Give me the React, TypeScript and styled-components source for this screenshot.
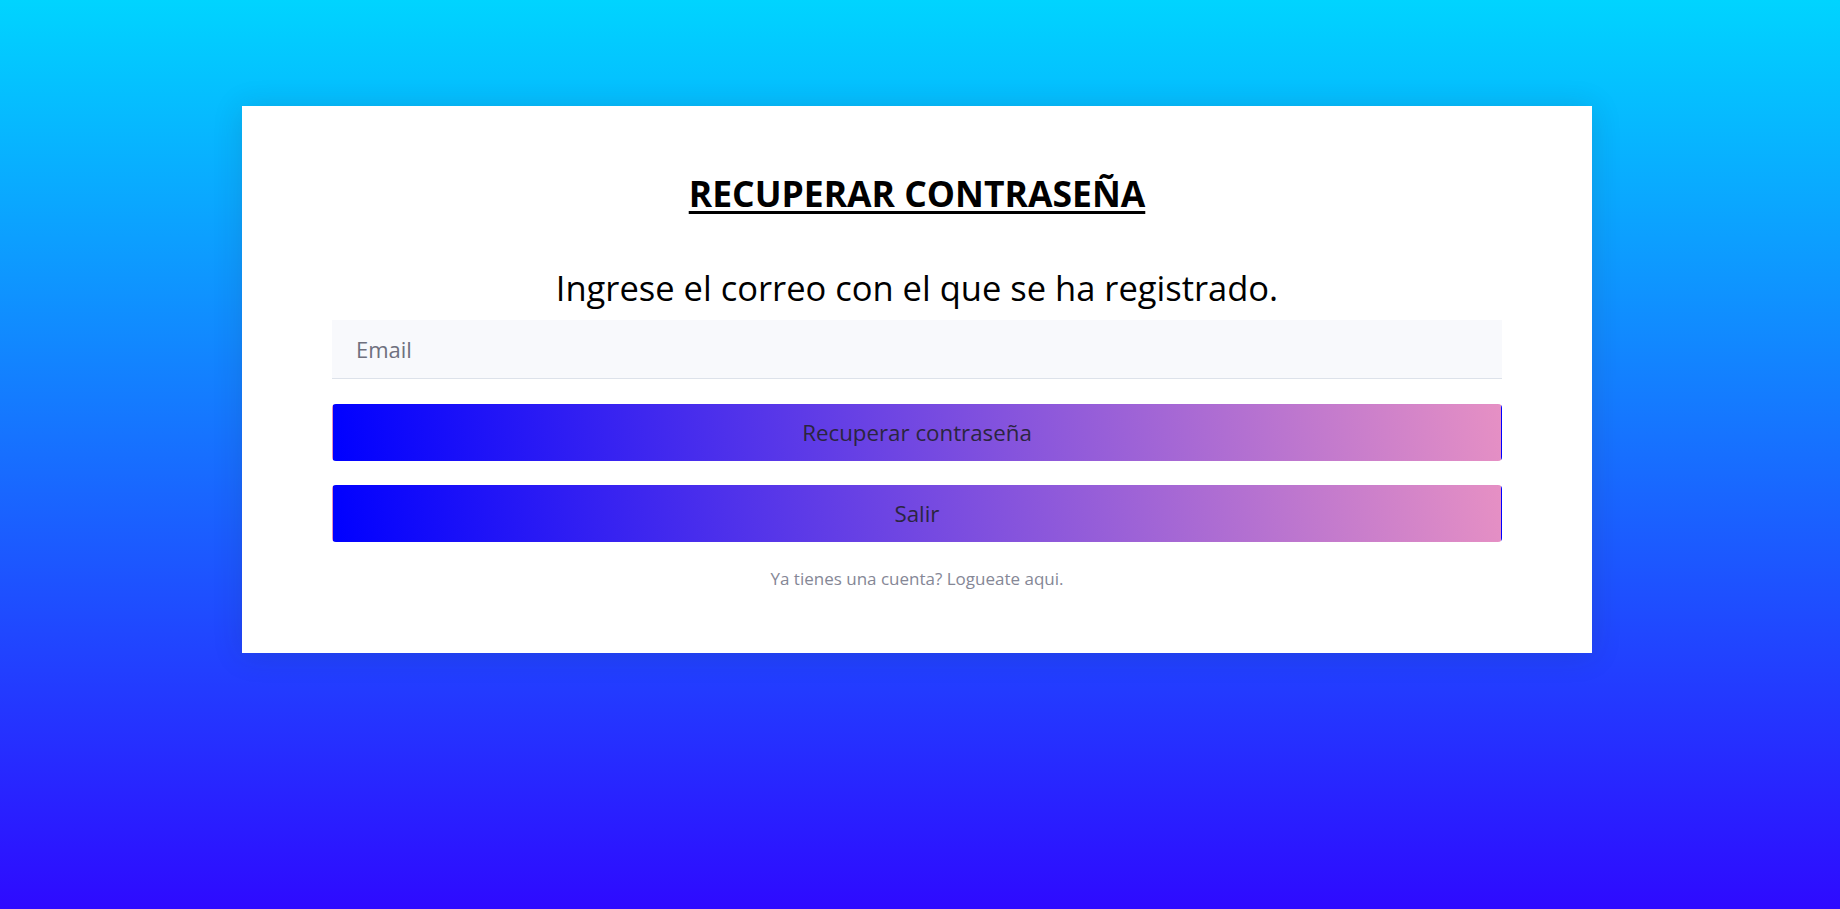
import React, { useState } from 'react';
import styled, { createGlobalStyle } from 'styled-components';

const GlobalStyle = createGlobalStyle`
  html, body {
    margin: 0;
    padding: 0;
  }

  body {
    min-height: 100vh;
    background: linear-gradient(180deg, #00d4ff 0%, #2e0aff 100%);
    background-attachment: fixed;
    font-family: 'Open Sans', 'Noto Sans', sans-serif;
    color: #3a3b45;
  }

  * {
    box-sizing: border-box;
  }
`;

const Page = styled.div`
  min-height: 100vh;
  padding: 106px 6px 0 0;
`;

const Card = styled.div`
  width: 1350px;
  margin: 0 auto;
  background: #ffffff;
  padding: 66px 90px 62px;
  box-shadow: 0 0.15rem 1.75rem 0 rgba(33, 40, 50, 0.15);
  text-align: center;
`;

const Title = styled.h1`
  margin: 0;
  font-size: 35.5px;
  line-height: 43px;
  font-weight: 700;
  color: #000;
  text-decoration: underline;
  text-decoration-thickness: 2.5px;
  text-underline-offset: 4px;
`;

const Subtitle = styled.h3`
  margin: 55px 0 14px;
  font-size: 34.5px;
  line-height: 36px;
  font-weight: 500;
  color: #000;
`;

const Form = styled.form`
  display: flex;
  flex-direction: column;
  gap: 24px;
`;

const EmailInput = styled.input`
  width: 100%;
  height: 59px;
  margin-bottom: 1px;
  padding: 0 24px;
  border: none;
  border-bottom: 1px solid #dde2ea;
  background: #f8f9fc;
  font-family: inherit;
  font-size: 22px;
  color: #3a3b45;

  &::placeholder {
    color: #6e707e;
  }

  &:focus {
    outline: none;
  }
`;

const GradientButton = styled.button`
  width: 100%;
  height: 57px;
  border: 1px solid transparent;
  border-radius: 4px;
  background: linear-gradient(80deg, #0000ff 0%, #e690c4 100%);
  font-family: inherit;
  font-size: 22.3px;
  color: #2b2540;
  cursor: pointer;
`;

const LoginLink = styled.a`
  display: block;
  margin-top: 25px;
  font-size: 17px;
  line-height: 24px;
  color: #858796;
  text-decoration: none;

  &:hover {
    text-decoration: underline;
  }
`;

const App: React.FC = () => {
  const [email, setEmail] = useState('');

  const handleSubmit = (e: React.FormEvent) => {
    e.preventDefault();
  };

  return (
    <>
      <GlobalStyle />
      <Page>
        <Card>
          <Title>RECUPERAR CONTRASEÑA</Title>
          <Subtitle>Ingrese el correo con el que se ha registrado.</Subtitle>
          <Form onSubmit={handleSubmit}>
            <EmailInput
              type="email"
              placeholder="Email"
              value={email}
              onChange={e => setEmail(e.target.value)}
            />
            <GradientButton type="submit">Recuperar contraseña</GradientButton>
            <GradientButton type="button">Salir</GradientButton>
          </Form>
          <LoginLink href="#">Ya tienes una cuenta? Logueate aqui.</LoginLink>
        </Card>
      </Page>
    </>
  );
};

export default App;
